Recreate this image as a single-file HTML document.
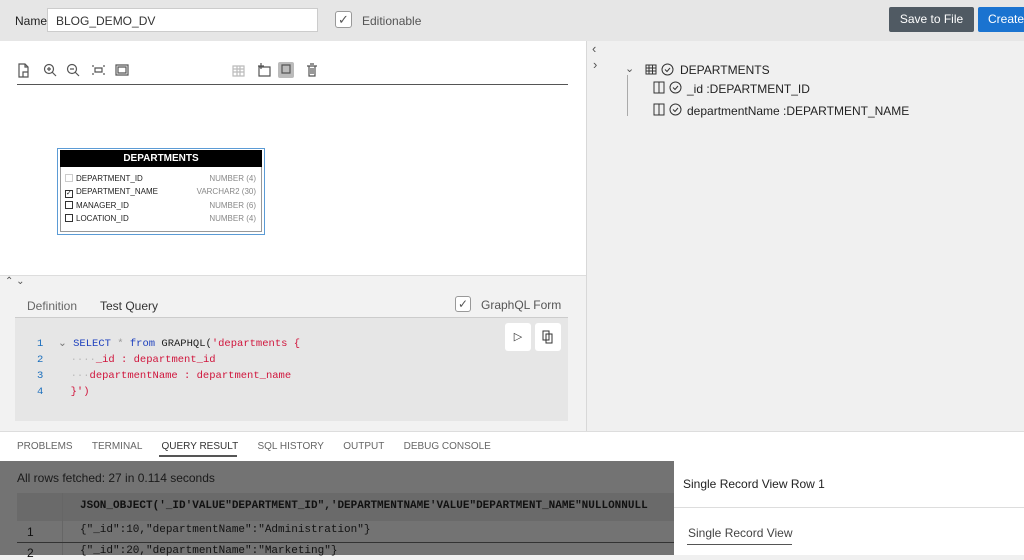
<!DOCTYPE html>
<html><head><meta charset="utf-8"><style>
*{box-sizing:border-box;margin:0;padding:0}
body{width:1024px;height:555px;overflow:hidden;position:relative;font-family:"Liberation Sans",sans-serif;background:#f0f0f0}
.a{position:absolute}
.mono{font-family:"Liberation Mono",monospace}
</style></head><body>
<div class="a" style="left:0;top:0;width:1024px;height:41px;background:#e6e6e6"></div>
<div class="a" style="left:15px;top:14px;font-size:12px;color:#222">Name</div>
<div class="a" style="left:47px;top:8px;width:271px;height:24px;background:#fff;border:1px solid #ccc;font-size:12px;color:#333;padding:5px 0 0 8px">BLOG_DEMO_DV</div>
<div class="a" style="left:335px;top:11px;width:17px;height:17px;border:1px solid #999;border-radius:3px;background:#fff;font-size:13px;color:#555;text-align:center;line-height:15px">✓</div>
<div class="a" style="left:362px;top:14px;font-size:12px;color:#555">Editionable</div>
<div class="a" style="left:889px;top:7px;width:85px;height:25px;background:#505a63;border-radius:2px;color:#fff;font-size:12px;text-align:center;line-height:25px">Save to File</div>
<div class="a" style="left:978px;top:7px;width:60px;height:25px;background:#1a73d0;border-radius:2px;color:#fff;font-size:12px;line-height:25px;padding-left:10px">Create</div>
<div class="a" style="left:0;top:41px;width:586px;height:234px;background:#fff"></div>
<div class="a" style="left:586px;top:41px;width:1px;height:390px;background:#d8d8d8"></div>
<div class="a" style="left:592px;top:41px;font-size:13px;color:#555">‹</div>
<div class="a" style="left:593px;top:57px;font-size:13px;color:#555">›</div>
<svg class="a" style="left:17px;top:62px" width="120" height="17" fill="none" stroke="#555" stroke-width="1.2">
<path d="M2 2h6l3 3v10H2z M8 2v3h3 M6 10h5v5H6z"/>
<circle cx="32" cy="7" r="4.5"/><path d="M35 10l4 4 M30 7h4 M32 5v4"/>
<circle cx="55" cy="7" r="4.5"/><path d="M58 10l4 4 M53 7h4"/>
<path d="M76 3v2M76 11v2M87 3v2M87 11v2M78 6h7v4h-7z"/>
<path d="M99 3h12v10H99z M101 5h8v6h-8z"/>
</svg>
<svg class="a" style="left:230px;top:62px" width="90" height="17" fill="none" stroke="#555" stroke-width="1.2">
<path d="M3 4h11v10H3z M3 7h11M3 10h11M7 4v10M10 4v10" stroke="#bbb"/>
<path d="M29 5h11v9H29z M31 1v6M28 4h6" />
<rect x="48" y="0" width="16" height="16" fill="#bbb" stroke="none" rx="2"/>
<path d="M52 3h8v8h-8z"/>
<path d="M77 4h10M79 4v10h6V4M81 6v6M83 6v6M80 2h4"/>
</svg>
<div class="a" style="left:17px;top:84px;width:551px;height:1px;background:#555"></div>
<div class="a" style="left:57px;top:148px;width:208px;height:87px;border:1px solid #5b9bd5"></div>
<div class="a" style="left:60px;top:150px;width:202px;height:82px;border:1px solid #999;background:#fff"></div>
<div class="a" style="left:60px;top:150px;width:202px;height:17px;background:#000;color:#fff;font-size:10px;font-weight:bold;text-align:center;line-height:17px">DEPARTMENTS</div>
<div class="a" style="left:65px;top:172px;font-size:8px;color:#222;line-height:13.4px">
<div><span style="display:inline-block;width:8px;height:8px;border:1px solid #ccc;vertical-align:-1px;margin-right:3px"></span>DEPARTMENT_ID</div>
<div><span style="display:inline-block;width:8px;height:8px;border:1px solid #333;vertical-align:-1px;margin-right:3px;font-size:7px;line-height:6px">✓</span>DEPARTMENT_NAME</div>
<div><span style="display:inline-block;width:8px;height:8px;border:1px solid #333;vertical-align:-1px;margin-right:3px"></span>MANAGER_ID</div>
<div><span style="display:inline-block;width:8px;height:8px;border:1px solid #333;vertical-align:-1px;margin-right:3px"></span>LOCATION_ID</div>
</div>
<div class="a" style="left:180px;top:172px;width:76px;font-size:8px;color:#888;line-height:13.4px;text-align:right">NUMBER (4)<br>VARCHAR2 (30)<br>NUMBER (6)<br>NUMBER (4)</div>
<div class="a" style="left:625px;top:62px;font-size:11px;color:#555">⌄</div>
<svg class="a" style="left:645px;top:63px" width="30" height="14" fill="none" stroke="#333" stroke-width="1"><path d="M1 2h10v9H1zM1 5h10M1 8h10M4 2v9M7.5 2v9"/><circle cx="22.5" cy="6.5" r="5.5"/><path d="M20 6.5l2 2 3-3.5"/></svg>
<div class="a" style="left:680px;top:63px;font-size:12px;color:#222">DEPARTMENTS</div>
<div class="a" style="left:627px;top:75px;width:1px;height:41px;background:#aaa"></div>
<svg class="a" style="left:653px;top:81px" width="30" height="14" fill="none" stroke="#333" stroke-width="1"><path d="M1 1h10v11H1zM6 1v11"/><circle cx="22.5" cy="6.5" r="5.5"/><path d="M20 6.5l2 2 3-3.5"/></svg>
<div class="a" style="left:687px;top:82px;font-size:12px;color:#222">_id :DEPARTMENT_ID</div>
<svg class="a" style="left:653px;top:103px" width="30" height="14" fill="none" stroke="#333" stroke-width="1"><path d="M1 1h10v11H1zM6 1v11"/><circle cx="22.5" cy="6.5" r="5.5"/><path d="M20 6.5l2 2 3-3.5"/></svg>
<div class="a" style="left:687px;top:104px;font-size:12px;color:#222">departmentName :DEPARTMENT_NAME</div>
<div class="a" style="left:0;top:275px;width:586px;height:156px;background:#f2f2f2;border-top:1px solid #ddd"></div>
<div class="a" style="left:5px;top:276px;font-size:10px;color:#555">⌃ ⌄</div>
<div class="a" style="left:27px;top:299px;font-size:12px;color:#666">Definition</div>
<div class="a" style="left:100px;top:299px;font-size:12px;color:#333">Test Query</div>
<div class="a" style="left:78px;top:317px;width:70px;height:2px;background:#555"></div>
<div class="a" style="left:455px;top:296px;width:16px;height:16px;border:1px solid #999;border-radius:3px;background:#fff;font-size:12px;color:#555;text-align:center;line-height:14px">✓</div>
<div class="a" style="left:481px;top:298px;font-size:12px;color:#555">GraphQL Form</div>
<div class="a" style="left:15px;top:317px;width:553px;height:104px;background:#e6e6e6;border-top:1px solid #ccc"></div>
<div class="a" style="left:505px;top:323px;width:26px;height:28px;background:#fff;border-radius:3px;text-align:center;line-height:28px;font-size:11px;color:#333">▷</div>
<div class="a" style="left:535px;top:323px;width:26px;height:28px;background:#fff;border-radius:3px"></div>
<svg class="a" style="left:542px;top:330px" width="12" height="14" fill="none" stroke="#333"><path d="M1 1h6v9H1zM4 4h6v9H4z"/></svg>
<div class="a mono" style="left:37px;top:336px;font-size:10.5px;line-height:16px;color:#1c6fbd;white-space:pre">1
2
3
4</div>
<div class="a mono" style="left:58px;top:336px;font-size:10.5px;line-height:16px;white-space:pre;color:#d0153c"><span style="color:#777">⌄ </span><span style="color:#1c3fbd">SELECT</span> <span style="color:#999">*</span> <span style="color:#1c3fbd">from</span> <span style="color:#222">GRAPHQL(</span>'departments {
  <span style="color:#bbb">····</span>_id : department_id
  <span style="color:#bbb">···</span>departmentName : department_name
  }')</div>
<div class="a" style="left:0;top:431px;width:1024px;height:30px;background:#fff;border-top:1px solid #ddd"></div>
<div class="a" style="left:17px;top:441px;font-size:10px;color:#666;white-space:pre">PROBLEMS       TERMINAL       <span style="color:#333">QUERY RESULT</span>       SQL HISTORY       OUTPUT       DEBUG CONSOLE</div>
<div class="a" style="left:159px;top:455px;width:78px;height:2px;background:#555"></div>
<div class="a" style="left:0;top:461px;width:674px;height:94px;background:#737373"></div>
<div class="a" style="left:17px;top:471px;font-size:12px;color:#1a1a1a">All rows fetched: 27 in 0.114 seconds</div>
<div class="a" style="left:17px;top:493px;width:657px;height:28px;background:#6a6a6a"></div>
<div class="a" style="left:17px;top:493px;width:46px;height:62px;border-right:1px solid #666"></div>
<div class="a mono" style="left:80px;top:500px;font-size:11px;font-weight:bold;color:#111;white-space:nowrap;width:594px;overflow:hidden">JSON_OBJECT('_ID'VALUE"DEPARTMENT_ID",'DEPARTMENTNAME'VALUE"DEPARTMENT_NAME"NULLONNULL</div>
<div class="a" style="left:27px;top:525px;font-size:12px;color:#111">1</div>
<div class="a mono" style="left:80px;top:524px;font-size:11px;color:#111">{"_id":10,"departmentName":"Administration"}</div>
<div class="a" style="left:17px;top:542px;width:657px;height:1px;background:#333"></div>
<div class="a" style="left:27px;top:546px;font-size:12px;color:#111">2</div>
<div class="a mono" style="left:80px;top:545px;font-size:11px;color:#111">{"_id":20,"departmentName":"Marketing"}</div>
<div class="a" style="left:674px;top:461px;width:350px;height:94px;background:#fff"></div>
<div class="a" style="left:683px;top:477px;font-size:12px;color:#222">Single Record View Row 1</div>
<div class="a" style="left:674px;top:507px;width:350px;height:1px;background:#ddd"></div>
<div class="a" style="left:688px;top:526px;font-size:12px;color:#444">Single Record View</div>
<div class="a" style="left:687px;top:544px;width:105px;height:1px;background:#555"></div>
</body></html>
